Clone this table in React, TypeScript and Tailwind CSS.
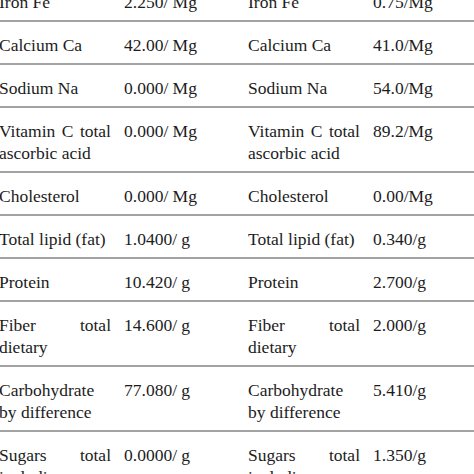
const rows: [string, string, string, string][] = [
  ["Iron Fe", "2.250/ Mg", "Iron Fe", "0.75/Mg"],
  ["Calcium Ca", "42.00/ Mg", "Calcium Ca", "41.0/Mg"],
  ["Sodium Na", "0.000/ Mg", "Sodium Na", "54.0/Mg"],
  ["Vitamin C total ascorbic acid", "0.000/ Mg", "Vitamin C total ascorbic acid", "89.2/Mg"],
  ["Cholesterol", "0.000/ Mg", "Cholesterol", "0.00/Mg"],
  ["Total lipid (fat)", "1.0400/ g", "Total lipid (fat)", "0.340/g"],
  ["Protein", "10.420/ g", "Protein", "2.700/g"],
  ["Fiber total dietary", "14.600/ g", "Fiber total dietary", "2.000/g"],
  ["Carbohydrate by difference", "77.080/ g", "Carbohydrate by difference", "5.410/g"],
  ["Sugars total including NLEA", "0.0000/ g", "Sugars total including NLEA", "1.350/g"],
]

export default function App() {
  return (
    <div
      className="w-[474px] h-[474px] overflow-hidden bg-white text-[#1c1c1c]"
      style={{ fontFamily: '"Liberation Serif", "Times New Roman", serif' }}
    >
      <div className="mt-[-21px] ml-[-1px] w-[520px]">
        {rows.map((row, i) => (
          <div
            key={i}
            className="grid grid-cols-[125px_124px_125px_124px] border-b-2 border-[#a3a3a3] pt-[12px] pb-[7px] text-[17.5px] leading-[22px]"
          >
            <div className="pr-[13px] text-justify">{row[0]}</div>
            <div>{row[1]}</div>
            <div className="pr-[13px] text-justify">{row[2]}</div>
            <div>{row[3]}</div>
          </div>
        ))}
      </div>
    </div>
  )
}
